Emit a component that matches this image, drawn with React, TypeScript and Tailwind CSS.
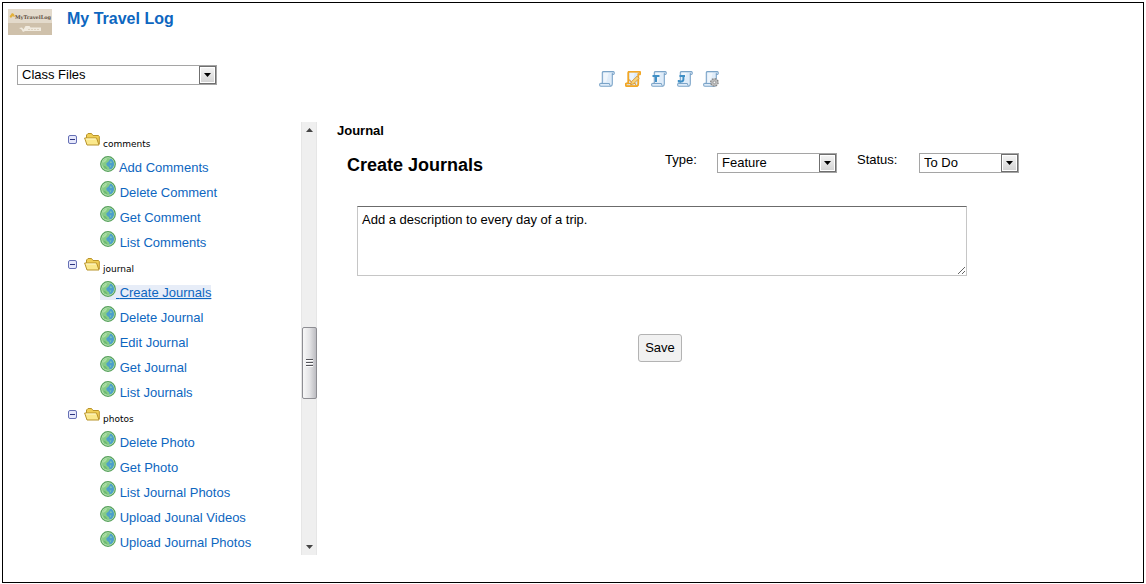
import { useState } from "react";
import type { ReactNode } from "react";

const folders = [
  { name: "comments", files: ["Add Comments", "Delete Comment", "Get Comment", "List Comments"] },
  {
    name: "journal",
    files: ["Create Journals", "Delete Journal", "Edit Journal", "Get Journal", "List Journals"],
  },
  {
    name: "photos",
    files: ["Delete Photo", "Get Photo", "List Journal Photos", "Upload Jounal Videos", "Upload Journal Photos"],
  },
];

function Logo() {
  return (
    <svg width="44" height="26" viewBox="0 0 44 26" role="img" aria-label="MyTravelLog">
      <rect width="44" height="26" fill="#cfc1ab" />
      <rect width="44" height="14" fill="#e3dacb" />
      <path d="M1.5 7.5 4 4l2 1 .8 3-2.3-.8L3 9z" fill="#e2b13c" />
      <text x="7" y="10" fontSize="5" fontWeight="bold" fill="#5d4f42" fontFamily="'DejaVu Serif', serif">
        MyTravelLog
      </text>
      <path d="m11 19 3-.5 1.5 2 2-3.5h4l1 1.5h10.5v3.5H17l-2 1-1.5-2.5z" fill="#f1ebdf" />
      <path d="M20 20.5h11" stroke="#ddd2c0" strokeDasharray="2 1" />
    </svg>
  );
}

function Globe() {
  return (
    <svg className="inline align-baseline" width="16" height="16" viewBox="0 0 16 16" aria-hidden="true">
      <circle cx="8" cy="8" r="7.3" fill="#c3e8bb" stroke="#55a05a" strokeWidth="1.2" />
      <circle cx="8" cy="8" r="6" fill="#86cb86" />
      <path d="M10.6 2.6A6 6 0 0 1 12 12.5L9.6 13.6 9 11.2 6.8 9.4 6.2 7.6 8.6 5.4z" fill="#4c9fcc" />
      <path d="m10.8 4.8 1.4 1.6-1.3.8-1.2-.7zM9.6 9.2l1.9.4-1.2 1.8z" fill="#7cc6b4" />
      <path d="M2.6 6.8Q3.6 3 7.4 2.4L6 5 3.8 6.4z" fill="#ace0a4" />
      <path d="M3.2 9.4 6 10.8l1.6 2.8Q4.4 12.8 3.2 9.4z" fill="#68b76e" />
    </svg>
  );
}

function FolderIcon() {
  return (
    <svg className="inline align-baseline" width="16" height="16" viewBox="0 0 16 16" aria-hidden="true">
      <path d="M2.5 11V4l1.5-1.5h3.5L9 4.5h5.5l.8 1V13z" fill="#f0cf55" stroke="#b8932b" />
      <path d="M.6 7h12l2.4 7H3z" fill="#fbe98c" stroke="#b8932b" strokeLinejoin="round" />
      <path d="M1.8 8h10" stroke="#fffad2" />
    </svg>
  );
}

function Toggle({ open }: { open: boolean }) {
  return (
    <svg className="inline align-baseline" width="9" height="16" viewBox="0 0 9 16" aria-hidden="true">
      <rect x=".5" y="4.5" width="8" height="8" rx="1.5" fill="#e6e8fb" stroke="#6670b5" />
      <path d="M2 8.5h5" stroke="#2d3580" />
      {!open && <path d="M4.5 6v5" stroke="#2d3580" />}
    </svg>
  );
}

function Scroll({ edge = "#7ba4c8", fill = "#dfecf9", children }: { edge?: string; fill?: string; children?: ReactNode }) {
  return (
    <svg width="16" height="16" viewBox="0 0 16 16" aria-hidden="true">
      <path
        d="M3.3 12.3V1.6Q3.4.6 4.6.6h9.8q1 .2.9 1.7-.1 1.2-1 1.2h-1v9.3q-.1 2.4-1.8 2.4H1.8Q.6 15.2.6 13.7q0-1.4 1.2-1.4z"
        fill={fill}
        stroke={edge}
        strokeWidth="1.1"
        strokeLinejoin="round"
      />
      <path d="M13.3 3.5V1.8M1.8 12.5h8.6q.2 2.4 1.3 2.5" fill="none" stroke={edge} />
      <path d="M4.6 1.8h5.2L7.4 11H4.6z" fill="#fff" opacity=".5" />
      {children}
    </svg>
  );
}

const tools = [
  { label: "New script", icon: <Scroll /> },
  {
    label: "Edit script",
    icon: (
      <Scroll edge="#f0a01e" fill="#d9e9f9">
        <path
          d="M3.3 12.3V1.6Q3.4.6 4.6.6h9.8q1 .2.9 1.7-.1 1.2-1 1.2h-1v9.3q-.1 2.4-1.8 2.4H1.8Q.6 15.2.6 13.7q0-1.4 1.2-1.4z"
          fill="none"
          stroke="#f2a726"
          strokeWidth="1.7"
        />
        <path d="m5.6 13.8.7-3L12 5.2l2.2 2.2-5.6 5.4z" fill="#f7d27a" stroke="#cf8f30" strokeWidth=".8" />
        <path d="m4.2 8.6 2.4 2.8" stroke="#dfa04a" strokeWidth="1.4" />
      </Scroll>
    ),
  },
  {
    label: "Text script",
    icon: (
      <Scroll>
        <path d="M1.5 5h7M5 5v6" stroke="#3f8fc6" strokeWidth="2" />
      </Scroll>
    ),
  },
  {
    label: "Java script",
    icon: (
      <Scroll>
        <path d="M2.5 5H8M6.4 5v3.6q0 1.8-2 1.8H1.8V9" fill="none" stroke="#3f8fc6" strokeWidth="2" />
      </Scroll>
    ),
  },
  {
    label: "Script settings",
    icon: (
      <Scroll>
        <circle cx="11.4" cy="11.4" r="3.6" fill="#b7b7b7" stroke="#858585" strokeWidth="1.6" strokeDasharray="1.6 1.2" />
        <circle cx="11.4" cy="11.4" r="3" fill="#bdbdbd" />
        <circle cx="11.4" cy="11.4" r="1.3" fill="#f4f4f4" stroke="#858585" strokeWidth=".7" />
      </Scroll>
    ),
  },
];

function Select({ id, label, options, width }: { id: string; label?: string; options: string[]; width: string }) {
  return (
    <div className={`relative h-5 ${width}`}>
      <select
        id={id}
        aria-label={label}
        className="block h-5 w-full appearance-none border border-[#a5a5a5] bg-white pr-5 pl-1 leading-[18px] outline-none"
      >
        {options.map((option) => (
          <option key={option}>{option}</option>
        ))}
      </select>
      <span className="pointer-events-none absolute inset-y-px right-px flex w-[17px] items-center justify-center border border-[#6f6f6f] bg-linear-to-b from-[#f5f5f5] to-[#d2d2d2] ring-1 ring-white ring-inset">
        <svg width="7" height="4" viewBox="0 0 7 4" aria-hidden="true">
          <path d="M0 0h7L3.5 4z" />
        </svg>
      </span>
    </div>
  );
}

function ScrollBar() {
  return (
    <div className="flex w-4 shrink-0 flex-col items-center border-x border-[#e6e6e6] bg-[#efefef]">
      <button aria-label="Scroll up" className="flex h-4 w-4 items-center justify-center">
        <svg width="7" height="4" viewBox="0 0 7 4" aria-hidden="true">
          <path d="M0 4h7L3.5 0z" fill="#444" />
        </svg>
      </button>
      <div className="grow-189 basis-0" />
      <div className="flex h-[72px] w-[15px] flex-col items-center justify-center gap-px rounded-xs border border-[#8e8e93] bg-linear-to-r from-[#f8f8f8] via-[#e4e4e6] to-[#bcbcc1]">
        <i className="h-0.5 w-[7px] border-b border-white bg-[#55555a]" />
        <i className="h-0.5 w-[7px] border-b border-white bg-[#55555a]" />
        <i className="h-0.5 w-[7px] border-b border-white bg-[#55555a]" />
      </div>
      <div className="grow-140 basis-0" />
      <button aria-label="Scroll down" className="flex h-4 w-4 items-center justify-center">
        <svg width="7" height="4" viewBox="0 0 7 4" aria-hidden="true">
          <path d="M0 0h7L3.5 4z" fill="#444" />
        </svg>
      </button>
    </div>
  );
}

function Tree({ selected, onSelect }: { selected: string; onSelect: (file: string) => void }) {
  const [closed, setClosed] = useState<string[]>([]);
  const flip = (name: string) =>
    setClosed((list) => (list.includes(name) ? list.filter((n) => n !== name) : [...list, name]));

  return (
    <ul className="grow pt-2 pl-[51px] leading-[25px]">
      {folders.map((folder) => {
        const open = !closed.includes(folder.name);
        return (
          <li key={folder.name}>
            <button className="flex h-[25px] items-baseline text-black" aria-expanded={open} onClick={() => flip(folder.name)}>
              <Toggle open={open} />
              <span className="pl-[7px]">
                <FolderIcon />
              </span>
              <span className="pl-[3px] font-['DejaVu_Sans',sans-serif] text-[9px]">{folder.name}</span>
            </button>
            {open && (
              <ul className="pl-8">
                {folder.files.map((file) => (
                  <li key={file} className="h-[25px]">
                    <a
                      href="#file"
                      onClick={() => onSelect(file)}
                      className={
                        file === selected
                          ? "bg-[#e7edf8] whitespace-nowrap text-[#0d66c0] underline"
                          : "whitespace-nowrap text-[#0d66c0] hover:underline"
                      }
                    >
                      <Globe /> {file}
                    </a>
                  </li>
                ))}
              </ul>
            )}
          </li>
        );
      })}
    </ul>
  );
}

export default function App() {
  const [selected, setSelected] = useState("Create Journals");

  return (
    <div className="flex min-h-screen bg-white p-0.5 pb-px font-['Liberation_Sans',Arial,sans-serif] text-[13px] text-black">
      <div className="grow border border-black">
        <header className="flex h-[62px] gap-[15px] pt-1.5 pl-[5px]">
          <Logo />
          <h1 className="text-base leading-[19px] font-bold text-[#0d66c0]">My Travel Log</h1>
        </header>

        <div className="grid grid-cols-[320px_1fr] pl-3.5">
          <Select id="view" label="File view" options={["Class Files", "Script Files"]} width="w-[200px]" />
          <div className="flex max-w-[644px] items-center justify-center gap-2.5 pt-1.5">
            {tools.map((tool) => (
              <button key={tool.label} aria-label={tool.label} title={tool.label}>
                {tool.icon}
              </button>
            ))}
          </div>
        </div>

        <div className="grid grid-cols-[320px_1fr] items-start pt-[35px] pb-[26px] pl-3.5">
          <nav aria-label="Files" className="mr-5 flex h-[433px]">
            <Tree selected={selected} onSelect={setSelected} />
            <ScrollBar />
          </nav>

          <main>
            <h2 className="pt-px leading-4 font-bold">Journal</h2>
            <form className="max-w-[650px]" onSubmit={(event) => event.preventDefault()}>
              <div className="flex items-start pt-3.5 pl-2.5">
                <h3 className="w-[318px] shrink-0 text-lg leading-6 font-bold">{selected}</h3>
                <label htmlFor="type" className="w-[52px] shrink-0 leading-[14px]">
                  Type:
                </label>
                <Select id="type" options={["Feature", "Bug", "Task"]} width="w-[120px] shrink-0" />
                <label htmlFor="status" className="ml-5 w-[62px] shrink-0 leading-[14px]">
                  Status:
                </label>
                <Select id="status" options={["To Do", "In Progress", "Done"]} width="w-[100px] shrink-0" />
              </div>
              <div className="px-5 pt-[29px]">
                <textarea
                  aria-label="Description"
                  defaultValue="Add a description to every day of a trip."
                  className="block h-[70px] w-full resize border border-[#c6c6c6] border-t-[#6b6b6b] px-1 py-[5px] leading-4 outline-none"
                />
              </div>
              <div className="flex max-w-[646px] justify-center pt-[58px]">
                <button className="h-7 rounded-[3px] border border-[#b3b3b3] bg-[#f1f1f1] px-1.5">Save</button>
              </div>
            </form>
          </main>
        </div>
      </div>
    </div>
  );
}
